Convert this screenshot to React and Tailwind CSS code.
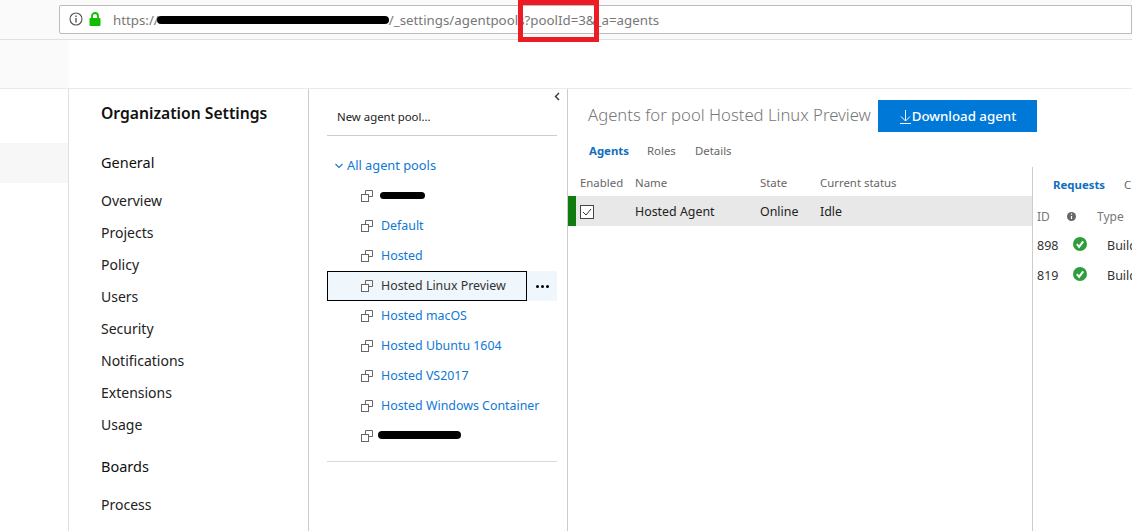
import React from 'react';

const FONT = "font-['Noto_Sans',sans-serif]";

const navItems = ['Overview', 'Projects', 'Policy', 'Users', 'Security', 'Notifications', 'Extensions', 'Usage'];

function PoolIcon() {
  return (
    <svg width="12" height="12" viewBox="0 0 12 12" fill="none" stroke="#666" strokeWidth="1" className="shrink-0 mr-[8px]">
      <path d="M4.5 4.5V0.5H11.5V6.5H7.5" />
      <rect x="0.5" y="4.5" width="7" height="7" fill="#fff" />
    </svg>
  );
}

function GreenCheck() {
  return (
    <svg width="14" height="14" viewBox="0 0 14 14" className="shrink-0 -mt-[4px]">
      <circle cx="7" cy="7" r="7" fill="#2e9e3c" />
      <path d="M3.8 7.2L6.1 9.8L10.2 4.4" fill="none" stroke="#fff" strokeWidth="2" />
    </svg>
  );
}

function Blob({ className }) {
  return <span className={`inline-block bg-black rounded-full ${className}`} />;
}

function PoolRow({ name, blob, selected }) {
  return (
    <div className="flex h-[30px]">
      <div className={`w-[200px] flex items-center ${selected ? 'bg-[#eff6fc] border border-black pl-[33px]' : 'pl-[34px]'}`}>
        <PoolIcon />
        {blob ? (
          <Blob className={blob} />
        ) : (
          <span className={`text-[12.4px] whitespace-nowrap ${selected ? 'text-[#333]' : 'text-[#0f78d4]'}`}>{name}</span>
        )}
      </div>
      {selected && (
        <div className="w-[30px] bg-[#eff6fc] flex items-center justify-center gap-[2px]">
          <span className="w-[3px] h-[3px] rounded-full bg-black" />
          <span className="w-[3px] h-[3px] rounded-full bg-black" />
          <span className="w-[3px] h-[3px] rounded-full bg-black" />
        </div>
      )}
    </div>
  );
}

function RequestRow({ id }) {
  return (
    <div className="flex items-center h-[30px] pl-[4px] text-[12.5px] text-[#333] whitespace-nowrap">
      <span className="w-[36px] shrink-0">{id}</span>
      <GreenCheck />
      <span className="ml-[20px]">Build</span>
    </div>
  );
}

export default function App() {
  return (
    <div className={`relative w-[1132px] h-[531px] overflow-hidden bg-white ${FONT}`}>
      {/* browser bar */}
      <div className="h-[40px] bg-[#fafafa] border-b border-[#e0e0e0] pl-[59px] pt-[5px]">
        <div className="h-[29px] bg-white border border-[#bbb] rounded-l-[2px] flex items-center pl-[9px] pt-[3px] text-[13.3px] text-[#777]">
          <svg width="14" height="14" viewBox="0 0 14 14" fill="none" className="mr-[6px] -mt-[4px]">
            <circle cx="7" cy="7" r="6" stroke="#555" strokeWidth="1.1" />
            <path d="M7 6v4.5M7 3.5v1.5" stroke="#555" strokeWidth="1.4" />
          </svg>
          <svg width="12" height="14" viewBox="0 0 12 14" className="mr-[12px] -mt-[4px]">
            <path d="M3 6V4a3 3 0 0 1 6 0v2" fill="none" stroke="#12bc00" strokeWidth="1.8" />
            <rect x="0.5" y="6" width="11" height="8" rx="1" fill="#12bc00" />
          </svg>
          <span>https://</span>
          <Blob className="w-[232px] h-[8px] -ml-[2px] -mt-[2px]" />
          <span>/_settings/agentpools?poolId=3&amp;_a=agents</span>
        </div>
      </div>

      {/* toolbar strip */}
      <div className="h-[49px] border-b border-[#eaeaea] flex">
        <div className="w-[69px] bg-[#fafafa]" />
      </div>

      <div className="flex h-[442px]">
        {/* left rail */}
        <div className="w-[69px] shrink-0 border-r border-[#e0e0e0] pt-[54px]">
          <div className="h-[40px] bg-[#f7f7f7]" />
        </div>

        {/* settings nav */}
        <div className="w-[240px] shrink-0 border-r border-[#ccc] pl-[32px] text-[#222]">
          <div className="text-[15.7px] font-semibold leading-[24px] mt-[12px] text-[#111]">Organization Settings</div>
          <div className="text-[14.5px] leading-[20px] mt-[27px] text-[#111]">General</div>
          <div className="mt-[12px]">
            {navItems.map((item) => (
              <div key={item} className="h-[32px] flex items-center text-[14px]">{item}</div>
            ))}
          </div>
          <div className="text-[14.5px] leading-[20px] mt-[16px] text-[#111]">Boards</div>
          <div className="h-[32px] flex items-center text-[14px] mt-[12px]">Process</div>
        </div>

        {/* pool list */}
        <div className="relative w-[259px] shrink-0 border-r border-[#ccc] pl-[18px] pr-[10px]">
          <svg width="6" height="9" viewBox="0 0 6 9" className="absolute right-[7px] top-[3px]" fill="none" stroke="#333" strokeWidth="1.4">
            <path d="M5 1L1.5 4.5L5 8" />
          </svg>
          <div className="h-[47px] border-b border-[#ccc] flex items-center pl-[10px] pt-[9px] text-[11.4px] text-[#222]">New agent pool...</div>
          <div className="h-[30px] mt-[15px] flex items-center pl-[8px] text-[12.8px] text-[#0f78d4]">
            <svg width="8" height="6" viewBox="0 0 8 6" fill="none" stroke="#0f78d4" strokeWidth="1.1" className="mr-[4px]">
              <path d="M0.5 1L4 4.5L7.5 1" />
            </svg>
            All agent pools
          </div>
          <PoolRow blob="w-[45px] h-[7px] -translate-y-px -ml-[1px]" />
          <PoolRow name="Default" />
          <PoolRow name="Hosted" />
          <PoolRow name="Hosted Linux Preview" selected />
          <PoolRow name="Hosted macOS" />
          <PoolRow name="Hosted Ubuntu 1604" />
          <PoolRow name="Hosted VS2017" />
          <PoolRow name="Hosted Windows Container" />
          <PoolRow blob="w-[83px] h-[8px] -translate-y-px -ml-[3px]" />
          <div className="border-b border-[#d8d8d8] h-[11px]" />
        </div>

        {/* agents */}
        <div className="flex-1 min-w-0">
          <div className="flex items-center h-[32px] mt-[11px] pl-[20px]">
            <span className="text-[16.7px] font-light text-[#777] whitespace-nowrap w-[290px] -mt-[3px]">Agents for pool Hosted Linux Preview</span>
            <button className="w-[159px] h-[32px] pt-[1px] bg-[#0078d7] text-white text-[13.3px] font-medium flex items-center justify-center">
              <svg width="13" height="15" viewBox="0 0 13 15" fill="none" stroke="#fff" strokeWidth="1">
                <path d="M6.5 1v10.5M2 7.5l4.5 4.5 4.5-4.5M1 14.5h11" />
              </svg>
              Download agent
            </button>
          </div>
          <div className="flex h-[24px] mt-[7px] pl-[21px] items-center text-[11.4px] text-[#666]">
            <span className="font-bold text-[#106ebe] w-[58px]">Agents</span>
            <span className="w-[48px]">Roles</span>
            <span>Details</span>
          </div>
          <div className="flex mt-[4px]">
            <div className="w-[465px] shrink-0 border-r border-[#ccc] h-[364px]">
              <div className="flex h-[29px] items-end pb-[5px] pl-[12px] text-[11.4px] text-[#666]">
                <span className="w-[55px]">Enabled</span>
                <span className="w-[125px]">Name</span>
                <span className="w-[60px]">State</span>
                <span>Current status</span>
              </div>
              <div className="flex h-[30px] items-center bg-[#e8e8e8] text-[12.4px] text-[#222]">
                <span className="w-[8px] h-full bg-[#107c10]" />
                <svg width="14" height="14" viewBox="0 0 14 14" fill="none" className="ml-[4px] mr-[41px] mt-[2px]">
                  <rect x="0.5" y="0.5" width="13" height="13" fill="#fff" stroke="#444" />
                  <path d="M3 7l3 3 5-6" stroke="#333" strokeWidth="1" />
                </svg>
                <span className="w-[125px] pt-[2px]">Hosted Agent</span>
                <span className="w-[60px] pt-[2px]">Online</span>
                <span className="pt-[2px]">Idle</span>
              </div>
            </div>
            <div className="flex-1 min-w-0 overflow-hidden">
              <div className="flex h-[30px] pt-[6px] pl-[20px] text-[11.4px] text-[#666] whitespace-nowrap items-center">
                <span className="font-bold text-[#106ebe] w-[71px] shrink-0">Requests</span>
                <span>C</span>
              </div>
              <div className="flex h-[34px] items-center pl-[4px] pt-[5px] text-[12px] text-[#777]">
                <span className="w-[30px]">ID</span>
                <svg width="9" height="9" viewBox="0 0 9 9" className="mr-[21px]">
                  <circle cx="4.5" cy="4.5" r="4.5" fill="#666" />
                  <path d="M4.5 4v3M4.5 1.6v1.2" stroke="#fff" strokeWidth="1.2" />
                </svg>
                <span>Type</span>
              </div>
              <RequestRow id="898" />
              <RequestRow id="819" />
            </div>
          </div>
        </div>
      </div>

      {/* red highlight drawn over the screenshot */}
      <div className="absolute left-[518px] top-0 w-[81px] h-[42px] border-[5px] border-[#ed1c24]" />
    </div>
  );
}
